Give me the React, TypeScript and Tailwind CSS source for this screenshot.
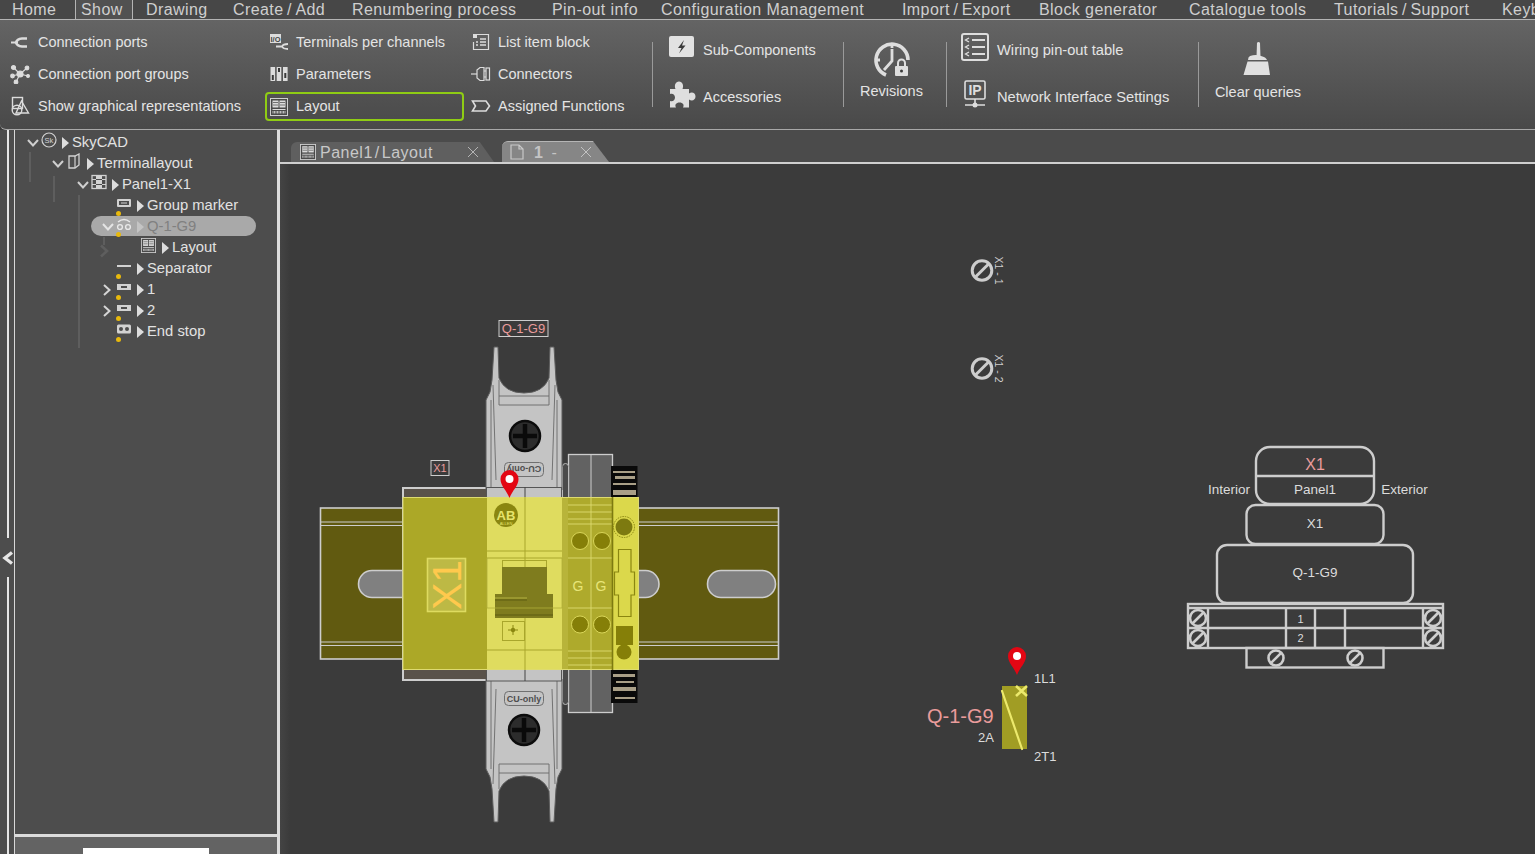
import React from "react";

const C = "#dcdcdc";

const I = ({ w = 20, h = 20, children }: { w?: number; h?: number; children: React.ReactNode }) => (
  <svg width={w} height={h} viewBox={`0 0 ${w} ${h}`} fill="none" stroke={C} strokeWidth="1.2" className="shrink-0">
    {children}
  </svg>
);

const PortIcon = () => (
  <I>
    <path d="M1 10.5H8" strokeWidth="2" />
    <path d="M17 6.5H12Q7 7 6 10.5Q7 14 12 14.5H17" strokeWidth="2.6" />
  </I>
);
const GroupsIcon = () => (
  <I>
    <g fill={C} stroke={C} strokeWidth="1.2">
      <path d="M4 4L10 10M17 4L10 10M2 12L10 10M18 12L10 10M6 18L10 10" />
      <circle cx="10" cy="10" r="3" />
      <circle cx="3.5" cy="3.5" r="2" />
      <circle cx="17" cy="4" r="1.8" />
      <circle cx="2.5" cy="12" r="1.8" />
      <circle cx="18" cy="12" r="1.4" />
      <circle cx="6" cy="18" r="1.8" />
    </g>
  </I>
);
const GraphicIcon = () => (
  <I>
    <rect x="2.5" y="1.5" width="10" height="11" strokeWidth="1.4" />
    <path d="M11.5 5L18.5 17H6Z" strokeWidth="1.4" />
    <circle cx="7" cy="14" r="4.8" strokeWidth="1.4" />
  </I>
);
const TerminalsIcon = () => (
  <svg width="18" height="20" viewBox="0 0 18 20" className="shrink-0">
    <rect x="0" y="2" width="11" height="9" fill={C} />
    <text x="5.5" y="9.6" textAnchor="middle" fontSize="7.5" fill="#444" fontFamily="Liberation Sans, sans-serif" fontWeight="700">I/O</text>
    <path d="M9 14.5H12Q13 12 18 12M12 14.5Q13 17 18 17M6 14.5H9" fill="none" stroke={C} strokeWidth="1.8" />
  </svg>
);
const ParamsIcon = () => (
  <svg width="18" height="16" viewBox="0 0 18 16" className="shrink-0">
    <rect x="0.5" y="1" width="4.6" height="14" fill={C} />
    <rect x="6.7" y="1" width="4.6" height="14" fill={C} />
    <rect x="13" y="1" width="4.6" height="14" fill={C} />
    <rect x="1.8" y="9" width="2" height="5" fill="#3a3a3a" />
    <rect x="8" y="2" width="2" height="4" fill="#3a3a3a" />
    <rect x="14.3" y="7" width="2" height="5" fill="#3a3a3a" />
  </svg>
);
const LayoutIcon = ({ s = 18 }: { s?: number }) => (
  <svg width={s} height={s} viewBox="0 0 18 18" className="shrink-0">
    <rect x="0.5" y="0.5" width="17" height="17" fill="#4a4a4a" stroke="#cfcfcf" />
    <rect x="2.5" y="2.5" width="6" height="7" fill="#dcdcdc" />
    <rect x="9.5" y="2.5" width="6" height="7" fill="#dcdcdc" />
    <path d="M3 4.5h5M3 7h5M10 4.5h5M10 7h5" stroke="#555" strokeWidth="0.8" />
    <path d="M2.5 11.5h13" stroke="#dcdcdc" strokeWidth="1" />
    <path d="M3 13v2.5M4.5 13v2.5M6 13v2.5M7.5 13v2.5M9 13v2.5M10.5 13v2.5M12 13v2.5M13.5 13v2.5M15 13v2.5" stroke="#dcdcdc" strokeWidth="0.8" />
  </svg>
);
const ListIcon = () => (
  <I w={18} h={18}>
    <path d="M5 1.5H16.5V16.5H1.5V9" />
    <rect x="1" y="1" width="4" height="4" fill={C} stroke="none" />
    <path d="M4 9H6M8 9H14M4 12H6M8 12H14M8 6H14" strokeWidth="1.4" />
  </I>
);
const ConnectorIcon = () => (
  <I w={20} h={18}>
    <path d="M0 9H6" />
    <path d="M6 5L9 2.5H13V15.5H9L6 13Z" />
    <rect x="15" y="3" width="3.5" height="12" />
    <path d="M13 6H15M13 12H15" />
  </I>
);
const TagIcon = () => (
  <I w={20} h={14}>
    <path d="M1.5 2H15L18.5 7L15 12H1.5L4.5 7Z" strokeWidth="1.6" />
  </I>
);

const RibbonItem = ({ icon, label, slot }: { icon: React.ReactNode; label: string; slot: string }) => (
  <div className="flex h-[32px] items-center">
    <div className={`-mt-[2px] flex items-center justify-center ${slot}`}>{icon}</div>
    <span className="whitespace-nowrap">{label}</span>
  </div>
);

const Sep = () => <div className="mt-[22px] h-[65px] w-px shrink-0 bg-[#9a9a9a]" />;

const Slash = ({ a, b }: { a: string; b: string }) => (
  <>
    {a}
    <span className="mx-[3.5px]">/</span>
    {b}
  </>
);

const menu: [React.ReactNode, string][] = [
  ["Drawing", "ml-[13px] w-[87px]"],
  [<Slash a="Create" b="Add" />, "w-[119px]"],
  ["Renumbering process", "w-[200px]"],
  ["Pin-out info", "w-[109px]"],
  ["Configuration Management", "w-[241px]"],
  [<Slash a="Import" b="Export" />, "w-[137px]"],
  ["Block generator", "w-[150px]"],
  ["Catalogue tools", "w-[145px]"],
  [<Slash a="Tutorials" b="Support" />, "w-[168px]"],
  ["Keyboard", "w-[80px]"],
];

const Tri = ({ color = "#dddddd" }: { color?: string }) => (
  <svg width="7" height="12" viewBox="0 0 7 12" className="shrink-0">
    <path d="M0 0L7 6L0 12Z" fill={color} />
  </svg>
);
const Chev = ({ color = "#cfcfcf" }: { color?: string }) => (
  <svg width="12" height="8" viewBox="0 0 12 8" className="shrink-0">
    <path d="M1 1L6 6.5L11 1" fill="none" stroke={color} strokeWidth="2" />
  </svg>
);
const ChevR = () => (
  <svg width="8" height="12" viewBox="0 0 8 12" className="shrink-0">
    <path d="M1 1L6.5 6L1 11" fill="none" stroke="#d5d5d5" strokeWidth="2" />
  </svg>
);
const TI = ({ children }: { children: React.ReactNode }) => (
  <svg width="16" height="16" viewBox="0 0 16 16" fill="none" stroke="#d2d2d2" strokeWidth="1.2" className="shrink-0">
    {children}
  </svg>
);
const icSky = (
  <TI>
    <circle cx="8" cy="8" r="7" />
    <text x="8" y="10.5" textAnchor="middle" fontSize="7.5" fill="#d2d2d2" stroke="none" fontFamily="Liberation Sans, sans-serif">Sk</text>
  </TI>
);
const icDoc = (
  <TI>
    <path d="M3 3H9L13 1V12L9 15H3Z" strokeWidth="1.3" />
    <path d="M9 3V15" />
  </TI>
);
const icStrip = (
  <TI>
    <rect x="1" y="1.5" width="14" height="13" strokeWidth="1.3" />
    <rect x="5" y="2" width="6" height="12" fill="#d2d2d2" stroke="none" />
    <path d="M1 5.5h14M1 10.5h14" stroke="#4d4d4d" strokeWidth="1" />
    <path d="M1 5.5h4M11 5.5h4M1 10.5h4M11 10.5h4" />
  </TI>
);
const icMarker = (
  <TI>
    <rect x="1" y="4" width="14" height="8" rx="1" fill="#d2d2d2" stroke="none" />
    <rect x="3" y="6" width="10" height="4" fill="#4d4d4d" stroke="none" />
    <path d="M5 8h6" strokeWidth="1" />
  </TI>
);
const icBreaker = (
  <svg width="16" height="16" viewBox="0 0 16 16" fill="none" stroke="#e8e8e8" strokeWidth="1.4" className="shrink-0">
    <path d="M2 6Q8 1 14 6" />
    <circle cx="4" cy="11" r="2.4" />
    <circle cx="12" cy="11" r="2.4" />
  </svg>
);
const icSep = (
  <TI>
    <path d="M1 8h14" strokeWidth="2" />
  </TI>
);
const icTerm = (
  <TI>
    <rect x="1" y="5" width="14" height="6" fill="#d2d2d2" stroke="none" />
    <rect x="5" y="7" width="6" height="2" fill="#4d4d4d" stroke="none" />
  </TI>
);
const icEnd = (
  <TI>
    <rect x="1" y="3.5" width="14" height="9" rx="1.5" fill="#d2d2d2" stroke="none" />
    <circle cx="5" cy="8" r="2" fill="#4d4d4d" stroke="none" />
    <circle cx="11" cy="8" r="2" fill="#4d4d4d" stroke="none" />
  </TI>
);

type Row = { pad: string; label: string; icon: React.ReactNode; chev?: "d" | "r"; dot?: boolean; sel?: boolean };
const rows: Row[] = [
  { pad: "pl-[12px]", label: "SkyCAD", icon: icSky, chev: "d" },
  { pad: "pl-[37px]", label: "Terminallayout", icon: icDoc, chev: "d" },
  { pad: "pl-[62px]", label: "Panel1-X1", icon: icStrip, chev: "d" },
  { pad: "pl-[87px]", label: "Group marker", icon: icMarker, dot: true },
  { pad: "pl-[87px]", label: "Q-1-G9", icon: icBreaker, chev: "d", dot: true, sel: true },
  { pad: "pl-[112px]", label: "Layout", icon: <LayoutIcon s={15} /> },
  { pad: "pl-[87px]", label: "Separator", icon: icSep, dot: true },
  { pad: "pl-[87px]", label: "1", icon: icTerm, chev: "r", dot: true },
  { pad: "pl-[87px]", label: "2", icon: icTerm, chev: "r", dot: true },
  { pad: "pl-[87px]", label: "End stop", icon: icEnd, dot: true },
];

const PINK = "#ea9c9c";
const LINE = "#cdcdcd";
const F = "Liberation Sans, sans-serif";

const NoSym = ({ x, y, r = 8, w = 2.6 }: { x: number; y: number; r?: number; w?: number }) => {
  const d = r * 0.72;
  return (
    <g stroke={LINE} strokeWidth={w} fill="none">
      <circle cx={x} cy={y} r={r} />
      <path d={`M${x - d} ${y + d}L${x + d} ${y - d}`} />
    </g>
  );
};

const Pin = ({ x, y }: { x: number; y: number }) => (
  <g>
    <path d={`M${x} ${y + 19}C${x - 3} ${y + 11} ${x - 9} ${y + 7} ${x - 9} ${y}A9 9 0 1 1 ${x + 9} ${y}C${x + 9} ${y + 7} ${x + 3} ${y + 11} ${x} ${y + 19}Z`} fill="#e30613" />
    <circle cx={x} cy={y} r="4" fill="#fff" />
  </g>
);

const Screw = ({ x, y }: { x: number; y: number }) => (
  <g>
    <circle cx={x} cy={y} r="15" fill="#2c2c2c" stroke="#0c0c0c" strokeWidth="2.5" />
    <path d={`M${x - 12} ${y}H${x + 12}M${x} ${y - 12}V${y + 12}`} stroke="#0a0a0a" strokeWidth="4.5" />
  </g>
);

const BreakerHalf = () => (
  <g>
    <path d="M494 347L498 347L499 378Q505 393 524 393Q543 393 549 378L550 347L554 347L556 380L558 392L562 400V490H486V400L490 392L492 380Z" fill="#c4c4c4" stroke="#5c5c5c" strokeWidth="1" />
    <path d="M499 380V405H549V380M499 396H549M491 400V490M557 400V490M493 385L496 480M555 385L552 480" fill="none" stroke="#6a6a6a" strokeWidth="0.9" />
  </g>
);

const Canvas = () => (
  <svg viewBox="280 164 1255 690" className="absolute inset-0 block h-full w-full" fontFamily={F}>
    {/* rail */}
    <rect x="320.5" y="508" width="458" height="151" fill="#615a10" stroke={LINE} strokeWidth="1.6" />
    <path d="M320 522H779M320 525.5H779M320 642H779M320 645.5H779" stroke={LINE} strokeWidth="1.2" />
    <rect x="358.5" y="570.5" width="120" height="27" rx="13.5" fill="#808080" stroke={LINE} strokeWidth="1.6" />
    <rect x="590" y="570.5" width="69" height="27" rx="13.5" fill="#808080" stroke={LINE} strokeWidth="1.6" />
    <rect x="707.5" y="570.5" width="68" height="27" rx="13.5" fill="#808080" stroke={LINE} strokeWidth="1.6" />

    {/* holder behind */}
    <rect x="403" y="488" width="84" height="192" fill="#59524a" stroke={LINE} strokeWidth="2" />
    <rect x="568.5" y="454.5" width="44" height="258" fill="#626262" stroke={LINE} strokeWidth="1.3" />
    <path d="M591 454V713" stroke={LINE} strokeWidth="1" />
    <rect x="562.5" y="463.5" width="6" height="241" rx="3" fill="#4a4a4a" stroke="#bbbbbb" strokeWidth="1" />
    <rect x="611" y="466" width="26.5" height="237" fill="#0a0a0a" />
    <g fill="#a99f87">
      <rect x="613" y="471" width="22" height="2" />
      <rect x="615" y="476" width="20" height="3" />
      <rect x="613" y="483" width="23" height="2" />
      <rect x="613" y="490" width="23" height="5" />
      <rect x="613" y="674" width="22" height="3" />
      <rect x="616" y="681" width="18" height="2" />
      <rect x="613" y="687" width="23" height="4" />
      <rect x="615" y="697" width="20" height="2" />
    </g>

    {/* breaker */}
    <BreakerHalf />
    <g transform="translate(0 1169) scale(1 -1)">
      <BreakerHalf />
    </g>
    <rect x="486.5" y="487.5" width="75" height="12" fill="#c4c4c4" stroke="#555" strokeWidth="1" />
    <rect x="486.5" y="668" width="75" height="13" fill="#c4c4c4" stroke="#555" strokeWidth="1" />
    <path d="M525 487V500M525 668V681" stroke="#444" strokeWidth="1" />
    <Screw x={525} y={436} />
    <Screw x={524} y={730} />
    <rect x="504.5" y="462.5" width="39" height="14" rx="4" fill="none" stroke="#707070" strokeWidth="1" />
    <text x="524" y="472.8" textAnchor="middle" fontSize="9" fontWeight="700" fill="#4e4e4e" transform="rotate(180 524 469.5)">CU-only</text>
    <rect x="504.5" y="691.5" width="39" height="14" rx="4" fill="none" stroke="#707070" strokeWidth="1" />
    <text x="524" y="701.8" textAnchor="middle" fontSize="9" fontWeight="700" fill="#4e4e4e">CU-only</text>

    {/* yellow overlay */}
    <rect x="403" y="497.5" width="84" height="172" fill="#aca827" />
    <rect x="487" y="497.5" width="75" height="172" fill="#dfdc5f" />
    <rect x="562" y="497.5" width="6" height="172" fill="#b8b43a" />
    <rect x="568" y="497.5" width="44" height="172" fill="#aeaa2c" />
    <rect x="612" y="497.5" width="26.5" height="172" fill="#dbd84b" />
    <rect x="403" y="497.5" width="235.5" height="172" fill="none" stroke="#dedb70" strokeWidth="1" />

    {/* X1 tag */}
    <rect x="427.5" y="558.5" width="38" height="53" fill="#bdb945" stroke="#dedb60" strokeWidth="1.6" />
    <text transform="translate(461 585) rotate(-90)" textAnchor="middle" fontSize="41" fill="#ffc94d">X1</text>

    {/* breaker detail on yellow */}
    <path d="M525 497V670M487 551H562M487 558H562M487 650H562" stroke="#a9a62c" strokeWidth="1" fill="none" />
    <circle cx="506" cy="515" r="12" fill="#8a8610" />
    <text x="506" y="520" textAnchor="middle" fontSize="13" fontWeight="700" fill="#e6e36c">AB</text>
    <text x="506" y="525" textAnchor="middle" fontSize="4" fill="#e6e36c">ALLEN</text>
    <rect x="502.5" y="560.5" width="44" height="7" fill="none" stroke="#a9a62c" />
    <rect x="502" y="567" width="45" height="28" fill="#7f7c1e" />
    <rect x="495" y="594" width="58" height="24" fill="#7f7c1e" />
    <path d="M495 600H527M495 615H553" stroke="#5f5c10" strokeWidth="1" />
    <path d="M495 598H527" stroke="#b5b240" strokeWidth="1" />
    <path d="M487 558V608H562V558" fill="none" stroke="#b0ad38" strokeWidth="0.8" />
    <rect x="502.5" y="621.5" width="22" height="19" fill="none" stroke="#a9a62c" />
    <path d="M513 625V635M508 630H518" stroke="#8a8610" strokeWidth="1" />
    <circle cx="513" cy="630" r="2.2" fill="#8a8610" />

    {/* terminal block detail */}
    <path d="M591 497V670M568 505H612M568 512H612M568 519H612M568 524H612M568 558H612M568 608H612M568 651H612M568 658H612M568 665H612" stroke="#dedb70" strokeWidth="0.9" />
    <g fill="#857f08" stroke="#e0dd60" strokeWidth="0.9">
      <circle cx="580" cy="541" r="8.5" />
      <circle cx="602" cy="541" r="8.5" />
      <circle cx="580" cy="624.5" r="8.5" />
      <circle cx="602" cy="624.5" r="8.5" />
    </g>
    <text x="578" y="591" textAnchor="middle" fontSize="14" fill="#e8e578">G</text>
    <text x="601" y="591" textAnchor="middle" fontSize="14" fill="#e8e578">G</text>

    {/* end clamp */}
    <path d="M612.5 497V670" stroke="#7d7a10" strokeWidth="1.6" />
    <circle cx="624" cy="527" r="8.5" fill="#7d7a10" />
    <circle cx="624" cy="527" r="10.5" fill="none" stroke="#8a8610" strokeWidth="1" strokeDasharray="1.5 1" />
    <path d="M618.5 549.5H631V572H634.5V595H631V616.5H618.5V595H614.5V572H618.5Z" fill="#dbd84b" stroke="#8a8610" strokeWidth="1.2" />
    <rect x="616" y="626" width="17" height="19" fill="#857f08" />
    <circle cx="624" cy="652" r="7.5" fill="#857f08" />

    {/* labels */}
    <rect x="499" y="320.5" width="49" height="16" fill="none" stroke={LINE} strokeWidth="1" />
    <text x="523.5" y="333" textAnchor="middle" fontSize="13" fill={PINK}>Q-1-G9</text>
    <rect x="431" y="460.5" width="18" height="15" fill="none" stroke={LINE} strokeWidth="1" />
    <text x="440" y="472" textAnchor="middle" fontSize="11" fill={PINK}>X1</text>

    <Pin x={509.5} y={479} />
    <Pin x={1017} y={656} />

    {/* top symbols */}
    <NoSym x={982} y={270.5} r={9.8} w={3} />
    <NoSym x={982} y={368.5} r={9.8} w={3} />
    <text transform="translate(995 270.5) rotate(90)" textAnchor="middle" fontSize="10.5" fill="#cfcfcf">X1 - 1</text>
    <text transform="translate(995 368.5) rotate(90)" textAnchor="middle" fontSize="10.5" fill="#cfcfcf">X1 - 2</text>

    {/* schematic */}
    <rect x="1002" y="686" width="25" height="63" fill="#a19d24" />
    <path d="M1002 691L1022 749" stroke="#ece96c" strokeWidth="2.2" strokeLinecap="round" />
    <path d="M1016 686L1027 696M1027 686L1016 696" stroke="#ece96c" strokeWidth="2.6" />
    <text x="927" y="723" fontSize="20" fill={PINK}>Q-1-G9</text>
    <text x="978" y="742" fontSize="13" fill="#dcdcdc">2A</text>
    <text x="1034" y="683" fontSize="13" fill="#dcdcdc">1L1</text>
    <text x="1034" y="761" fontSize="13" fill="#dcdcdc">2T1</text>

    {/* cabinet view */}
    <g fill="none" stroke={LINE} strokeWidth="2.4">
      <rect x="1256" y="447" width="118" height="57" rx="14" />
      <path d="M1256 476H1374" />
      <rect x="1246.5" y="505" width="137" height="39" rx="9" />
      <rect x="1217" y="545" width="196" height="58" rx="10" />
      <rect x="1188" y="604" width="255" height="44" />
      <path d="M1188 608H1443M1188 628H1443M1208 608V648M1286 608V648M1315 608V648M1345 608V648M1423 608V648" />
      <rect x="1246.5" y="648" width="137" height="19.5" />
    </g>
    <text x="1315" y="470" textAnchor="middle" fontSize="16" fill={PINK}>X1</text>
    <g fontSize="13.5" fill="#dcdcdc" textAnchor="middle">
      <text x="1315" y="494">Panel1</text>
      <text x="1229" y="494">Interior</text>
      <text x="1404.5" y="494">Exterior</text>
      <text x="1315" y="528">X1</text>
      <text x="1315" y="576.5">Q-1-G9</text>
    </g>
    <g fontSize="11" fill="#dcdcdc" textAnchor="middle">
      <text x="1300.5" y="623">1</text>
      <text x="1300.5" y="642">2</text>
    </g>
    <NoSym x={1198} y={618} />
    <NoSym x={1198} y={638} />
    <NoSym x={1433} y={618} />
    <NoSym x={1433} y={638} />
    <NoSym x={1276} y={658} r={7.5} />
    <NoSym x={1355} y={658} r={7.5} />
  </svg>
);

export default function App() {
  return (
    <div className="flex h-[854px] w-[1535px] flex-col overflow-hidden bg-[#3b3b3b] font-['Liberation_Sans',sans-serif] text-[14.5px] text-[#e4e4e4]">
      {/* menu */}
      <div className="flex h-[20px] shrink-0 overflow-hidden border-b border-[#b4b4b4] bg-[#474747] pl-[12px] text-[16px] leading-[19px] tracking-[0.42px] text-[#cfcfcf]">
        <div className="w-[63px] shrink-0 whitespace-nowrap">Home</div>
        <div className="h-[20px] w-[58px] shrink-0 border-x border-[#b4b4b4] bg-[#515151] pl-[5px]">Show</div>
        {menu.map(([m, w], i) => (
          <div key={i} className={`shrink-0 whitespace-nowrap ${w}`}>
            {m}
          </div>
        ))}
      </div>

      {/* ribbon */}
      <div className="flex h-[110px] shrink-0 rounded-bl-[6px] border-b border-[#a8a8a8] bg-linear-to-b from-[#646464] to-[#494949] pl-[10px]">
        <div className="w-[255px] shrink-0 pt-[7px]">
          <RibbonItem slot="w-[28px] pr-[8px]" icon={<PortIcon />} label="Connection ports" />
          <RibbonItem slot="w-[28px] pr-[8px]" icon={<GroupsIcon />} label="Connection port groups" />
          <RibbonItem slot="w-[28px] pr-[8px]" icon={<GraphicIcon />} label="Show graphical representations" />
        </div>
        <div className="w-[206px] shrink-0 pt-[7px]">
          <div className="pl-[5px]">
            <RibbonItem slot="w-[26px] pr-[8px]" icon={<TerminalsIcon />} label="Terminals per channels" />
            <RibbonItem slot="w-[26px] pr-[8px]" icon={<ParamsIcon />} label="Parameters" />
          </div>
          <div className="mt-px flex h-[29px] w-[199px] items-center rounded-[4px] border-2 border-[#8fcc14] pl-[3px]">
            <div className="flex w-[26px] items-center pr-[8px]">
              <LayoutIcon />
            </div>
            <span>Layout</span>
          </div>
        </div>
        <div className="w-[181px] shrink-0 pt-[7px]">
          <RibbonItem slot="w-[27px] pr-[8px]" icon={<ListIcon />} label="List item block" />
          <RibbonItem slot="w-[27px] pr-[8px]" icon={<ConnectorIcon />} label="Connectors" />
          <RibbonItem slot="w-[27px] pr-[8px]" icon={<TagIcon />} label="Assigned Functions" />
        </div>
        <Sep />
        <div className="w-[190px] shrink-0 pl-[16px] pt-[7px]">
          <div className="flex h-[47px] items-center">
            <div className="-mt-[7px] w-[34px]">
              <svg width="26" height="22" viewBox="0 0 26 22" className="block">
                <rect width="25" height="21" rx="2" fill="#e2e2e2" />
                <path d="M15 4L9 12H12.5L10 17.5L16.5 9.5H13Z" fill="#3a3a3a" />
              </svg>
            </div>
            <span>Sub-Components</span>
          </div>
          <div className="flex h-[47px] items-center">
            <div className="-mt-[7px] w-[34px]">
              <svg width="27" height="27" viewBox="0 0 27 27" className="block">
                <path d="M1 8H6.5C5 4.5 6.5 0.5 10 0.5C13.5 0.5 15 4.5 13.5 8H20V12.5C23 10.5 26.5 12 26.5 15.5C26.5 19 23 20.5 20 18.5V26.5H14C15.5 24 14 21.5 10.5 21.5C7 21.5 5.5 24 7 26.5H1V20C3.5 21 6 19.5 6 16.5C6 13.5 3.5 12 1 13Z" fill="#dedede" />
              </svg>
            </div>
            <span>Accessories</span>
          </div>
        </div>
        <Sep />
        <div className="flex w-[102px] shrink-0 flex-col items-center pr-[7px] pt-[21px]">
          <svg width="38" height="38" viewBox="0 0 38 38" className="block">
            <path d="M13 34A16 16 0 1 1 35 19" fill="none" stroke="#dedede" strokeWidth="3.6" />
            <path d="M3 19H7M19 3V7M19 8V20L11 29" fill="none" stroke="#dedede" strokeWidth="2.8" />
            <rect x="22" y="25" width="13" height="10" rx="1" fill="#dedede" />
            <path d="M25 25V22A3.5 3.5 0 0 1 32 22V25" fill="none" stroke="#dedede" strokeWidth="2" />
            <circle cx="28.5" cy="30" r="1.5" fill="#3a3a3a" />
          </svg>
          <span className="mt-[2px] whitespace-nowrap">Revisions</span>
        </div>
        <Sep />
        <div className="w-[251px] shrink-0 pl-[14px] pt-[7px]">
          <div className="flex h-[47px] items-center">
            <div className="-mt-[8px] w-[36px]">
              <svg width="28" height="28" viewBox="0 0 28 28" className="block">
                <rect x="1" y="1" width="26" height="26" rx="2" fill="none" stroke="#dedede" strokeWidth="2" />
                <path d="M8 5L4.5 7L8 9M8 12L4.5 14L8 16M8 19L4.5 21L8 23" fill="none" stroke="#dedede" strokeWidth="1.3" />
                <path d="M11 7H24M11 14H24M11 21H24" stroke="#dedede" strokeWidth="2.2" />
              </svg>
            </div>
            <span className="text-[14.7px]">Wiring pin-out table</span>
          </div>
          <div className="flex h-[47px] items-center">
            <div className="-mt-[8px] w-[36px] pl-[3px]">
              <svg width="23" height="28" viewBox="0 0 23 28" className="block">
                <rect x="1" y="1" width="20" height="18" rx="1.5" fill="none" stroke="#dedede" strokeWidth="1.6" />
                <text x="11" y="15" textAnchor="middle" fontSize="14" fontWeight="700" fill="#dedede" fontFamily="Liberation Sans, sans-serif">IP</text>
                <path d="M11 19V25M1 25H21" stroke="#dedede" strokeWidth="1.6" />
                <circle cx="11" cy="25" r="2.5" fill="#dedede" />
              </svg>
            </div>
            <span className="text-[14.7px]">Network Interface Settings</span>
          </div>
        </div>
        <Sep />
        <div className="flex w-[118px] shrink-0 flex-col items-center pt-[21px]">
          <svg width="30" height="35" viewBox="0 0 30 35" className="block">
            <path d="M14 2A1.6 1.6 0 0 1 17 2L17.5 16H13.5Z" fill="#e0e0e0" />
            <path d="M7 15Q13 13 18 15Q23 16 24 19H5Q5 16 7 15Z" fill="#e0e0e0" />
            <path d="M4.5 20.5H25L27 34H0.5Z" fill="#e0e0e0" />
          </svg>
          <span className="mt-[6px] whitespace-nowrap">Clear queries</span>
        </div>
      </div>

      {/* body */}
      <div className="flex min-h-0 flex-1">
        {/* collapse strip */}
        <div className="relative w-[15px] shrink-0 border-r border-[#d8d8d8] bg-[#4d4d4d]">
          <div className="absolute left-[7px] top-0 h-[408px] w-[2px] bg-[#e6e6e6]" />
          <div className="absolute bottom-0 left-[7px] top-[447px] w-[2px] bg-[#e6e6e6]" />
          <svg width="13" height="14" viewBox="0 0 13 14" className="absolute left-[1px] top-[421px]">
            <path d="M11 1.5L4 7L11 12.5" fill="none" stroke="#e6e6e6" strokeWidth="3.4" />
          </svg>
        </div>

        {/* tree panel */}
        <div className="flex w-[265px] shrink-0 flex-col border-r-[3px] border-[#dcdcdc] bg-[#4d4d4d]">
          <div className="relative min-h-0 flex-1 pt-[2px] text-[14.8px]">
            <div className="absolute left-[14px] top-[22px] h-[30px] w-[2px] bg-[#5e5e5e]" />
            <div className="absolute left-[38px] top-[46px] h-[26px] w-[2px] bg-[#5e5e5e]" />
            <div className="absolute left-[63px] top-[65px] h-[153px] w-[2px] bg-[#5e5e5e]" />
            <div className="absolute left-[88px] top-[107px] h-[8px] w-[2px] bg-[#5e5e5e]" />
            <svg width="10" height="14" viewBox="0 0 10 14" className="absolute left-[85px] top-[114px]">
              <path d="M1 1.5L7 7L1 12.5" fill="none" stroke="#5e5e5e" strokeWidth="2.6" />
            </svg>
            {rows.map((r) => (
              <div key={r.label} className={`relative flex h-[21px] items-center ${r.pad}`}>
                {r.sel && <div className="absolute left-[76px] top-0 h-[20px] w-[165px] rounded-full bg-[#a9a9a9]" />}
                <div className="relative flex w-[14px] shrink-0 items-center">
                  {r.chev === "d" && <Chev color={r.sel ? "#e4e4e4" : "#cfcfcf"} />}
                  {r.chev === "r" && (
                    <span className="pl-[1px]">
                      <ChevR />
                    </span>
                  )}
                </div>
                <div className="relative -mt-[5px] flex w-[21px] shrink-0 items-center">{r.icon}</div>
                <div className="relative w-[10px] shrink-0">
                  <Tri color={r.sel ? "#c4c4c4" : "#dddddd"} />
                </div>
                <span className={`relative whitespace-nowrap ${r.sel ? "text-[#808080]" : "text-[#e2e2e2]"}`}>{r.label}</span>
                {r.dot && <span className="absolute left-[101px] top-[16px] h-[5px] w-[5px] rounded-full bg-[#e8b90c]" />}
              </div>
            ))}
          </div>
          <div className="flex h-[20px] shrink-0 justify-center border-t-[3px] border-[#dcdcdc] bg-[#636363] pt-[11px]">
            <div className="h-[6px] w-[126px] bg-white" />
          </div>
        </div>

        {/* document area */}
        <div className="flex min-w-0 flex-1 flex-col">
          <div className="flex h-[34px] shrink-0 items-end border-b-2 border-[#cfcfcf] bg-[#4b4b4b] pl-[11px] text-[16px] tracking-[0.5px]">
            <div className="flex h-[20px] w-[203px] items-center rounded-tl-[6px] bg-[#5f5f5f] pl-[9px] text-[#c8c8c8] [clip-path:polygon(0_0,93%_0,100%_100%,0_100%)]">
              <LayoutIcon s={16} />
              <span className="ml-[4px] w-[147px] whitespace-nowrap pt-[2px]">
                Panel1<span className="mx-[2px]">/</span>Layout
              </span>
              <svg width="12" height="12" viewBox="0 0 12 12" className="shrink-0">
                <path d="M1 1L11 11M11 1L1 11" stroke="#bdbdbd" strokeWidth="0.9" />
              </svg>
            </div>
            <div className="ml-[8px] flex h-[21px] w-[107px] items-center rounded-tl-[6px] border-t border-[#b5b5b5] bg-[#868686] pl-[8px] text-[#c4c4c4] [clip-path:polygon(0_0,85%_0,100%_100%,0_100%)]">
              <svg width="14" height="16" viewBox="0 0 14 16" className="shrink-0">
                <path d="M1 1H9L13 5V15H1Z M9 1V5H13" fill="none" stroke="#c8c8c8" strokeWidth="1.2" />
              </svg>
              <span className="ml-[10px] pt-[2px] font-bold">1</span>
              <span className="ml-[8px] pt-[2px]">-</span>
              <svg width="12" height="12" viewBox="0 0 12 12" className="ml-[23px] shrink-0">
                <path d="M1 1L11 11M11 1L1 11" stroke="#c8c8c8" strokeWidth="0.9" />
              </svg>
            </div>
          </div>
          <div className="relative min-h-0 flex-1 bg-[#3b3b3b]">
            <div className="absolute inset-y-0 left-0 w-[10px] bg-linear-to-r from-[#444444] to-[#3b3b3b]" />
            <Canvas />
          </div>
        </div>
      </div>
    </div>
  );
}
